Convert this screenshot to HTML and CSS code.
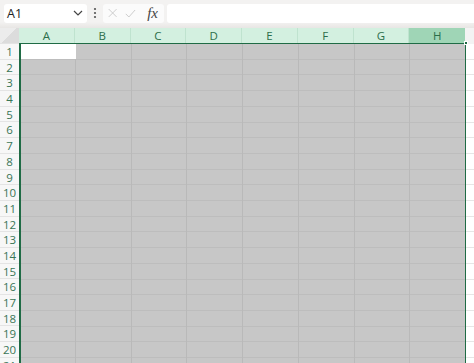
FILE: index.html
```html
<!DOCTYPE html>
<html lang="en">
<head>
    <meta charset="UTF-8">
    <meta name="viewport" content="width=device-width, initial-scale=1.0">
    <title>Sheet</title>
    <link rel="stylesheet" href="styles.css">
</head>
<body>

<div class="toolbar">
    <div class="namebox">
        <span>A1</span>
        <svg class="chev" width="10" height="6" viewBox="0 0 10 6"><path d="M1 1 L5 5 L9 1" fill="none" stroke="#444" stroke-width="1.2"/></svg>
    </div>
    <svg class="grip" width="4" height="12" viewBox="0 0 4 12"><circle cx="2" cy="2" r="1.1" fill="#555"/><circle cx="2" cy="6" r="1.1" fill="#555"/><circle cx="2" cy="10" r="1.1" fill="#555"/></svg>
    <div class="fbtns">
        <svg width="12" height="12" viewBox="0 0 12 12"><path d="M1 1 L11 11 M11 1 L1 11" stroke="#c4c4c4" stroke-width="1.1"/></svg>
        <svg width="14" height="11" viewBox="0 0 14 11"><path d="M1 6 L5 10 L13 1" fill="none" stroke="#c4c4c4" stroke-width="1.1"/></svg>
        <span class="fx">fx</span>
    </div>
    <div class="formula"></div>
</div>

<div class="sheet">
    <div class="colheads">
        <div class="corner"></div>
        <div class="ch">A</div>
        <div class="ch">B</div>
        <div class="ch">C</div>
        <div class="ch">D</div>
        <div class="ch">E</div>
        <div class="ch">F</div>
        <div class="ch">G</div>
        <div class="ch sel">H</div>
        <div class="ch rest"></div>
    </div>
    <div class="body">
        <div class="rowheads">
            <div>1</div><div>2</div><div>3</div><div>4</div><div>5</div>
            <div>6</div><div>7</div><div>8</div><div>9</div><div>10</div>
            <div>11</div><div>12</div><div>13</div><div>14</div><div>15</div>
            <div>16</div><div>17</div><div>18</div><div>19</div><div>20</div>
            <div>21</div>
        </div>
        <div class="cells">
            <div class="active"></div>
            <div class="handle"></div>
        </div>
        <div class="beyond"></div>
    </div>
</div>

</body>
</html>
```

FILE: styles.css
```css
* { margin: 0; padding: 0; box-sizing: border-box; }
body {
    font-family: "Open Sans", "Noto Sans", sans-serif;
    background: #fff;
    width: 474px;
    height: 363px;
    overflow: hidden;
}
.toolbar {
    display: flex;
    align-items: center;
    height: 28px;
    padding: 3px 0 5px 4px;
    background: linear-gradient(#f3f2f1 0, #f3f2f1 22px, #e8e6e4 28px);
}
.namebox {
    display: flex;
    align-items: center;
    justify-content: space-between;
    width: 83px;
    height: 19px;
    padding: 0 4px 0 3px;
    background: #fff;
    border-radius: 3px;
    font-size: 12.5px;
    color: #222;
}
.grip { margin: 0 6px 0 6px; }
.fbtns {
    display: flex;
    align-items: center;
    gap: 8px;
    width: 61px;
    height: 19px;
    padding: 0 6px 0 5px;
    background: #fbfbfb;
    border-radius: 3px;
}
.fx {
    font-family: "Liberation Serif", serif;
    font-style: italic;
    font-size: 15px;
    color: #444;
    margin-left: 3px;
}
.formula {
    flex: 1;
    height: 19px;
    margin-left: 3px;
    background: #fff;
    border-radius: 3px 0 0 3px;
}
.colheads {
    display: grid;
    grid-template-columns: 19px repeat(8, 55.75px) 1fr;
    height: 16px;
    border-bottom: 1px solid #1f6b45;
}
.corner {
    background: linear-gradient(135deg, #ececec 50%, #dcdcdc 50%);
    border-bottom: 1px solid #e3e3e3;
    margin-bottom: -1px;
}
.ch {
    background: #d3f0e0;
    border-right: 1px solid #bfe3cf;
    font-size: 11.5px;
    line-height: 15px;
    text-align: center;
    color: #2c6e4a;
}
.ch.sel { background: #9fd5b6; border-right: none; }
.ch.rest {
    background: #f3f3f3;
    border-right: none;
    margin-bottom: -1px;
}
.body {
    display: flex;
    height: 320px;
}
.rowheads {
    flex: none;
    width: 19px;
    background: #f7f7f7;
}
.rowheads div {
    height: 15.7px;
    font-size: 11.5px;
    line-height: 15.7px;
    text-align: center;
    color: #3a7556;
    border-bottom: 1px solid #e4e4e4;
}
.cells {
    position: relative;
    flex: none;
    width: 447px;
    border-left: 2px solid #1f6b45;
    border-right: 1px solid #1f6b45;
    background-color: #c7c7c7;
    background-image:
        repeating-linear-gradient(90deg, transparent 0, transparent 54.75px, #b9b9b9 54.75px, #b9b9b9 55.75px),
        repeating-linear-gradient(180deg, transparent 0, transparent 14.7px, #bdbdbd 14.7px, #bdbdbd 15.7px);
    background-position: -1px 0, 0 0;
}
.active {
    width: 54.75px;
    height: 14.7px;
    background: #fff;
}
.handle {
    position: absolute;
    top: -3px;
    right: -3px;
    width: 4px;
    height: 4px;
    background: #1f6b45;
    border: 1px solid #fff;
}
.beyond {
    flex: 1;
    background-color: #fff;
    background-image: repeating-linear-gradient(180deg, transparent 0, transparent 14.7px, #e6e6e6 14.7px, #e6e6e6 15.7px);
}
```
